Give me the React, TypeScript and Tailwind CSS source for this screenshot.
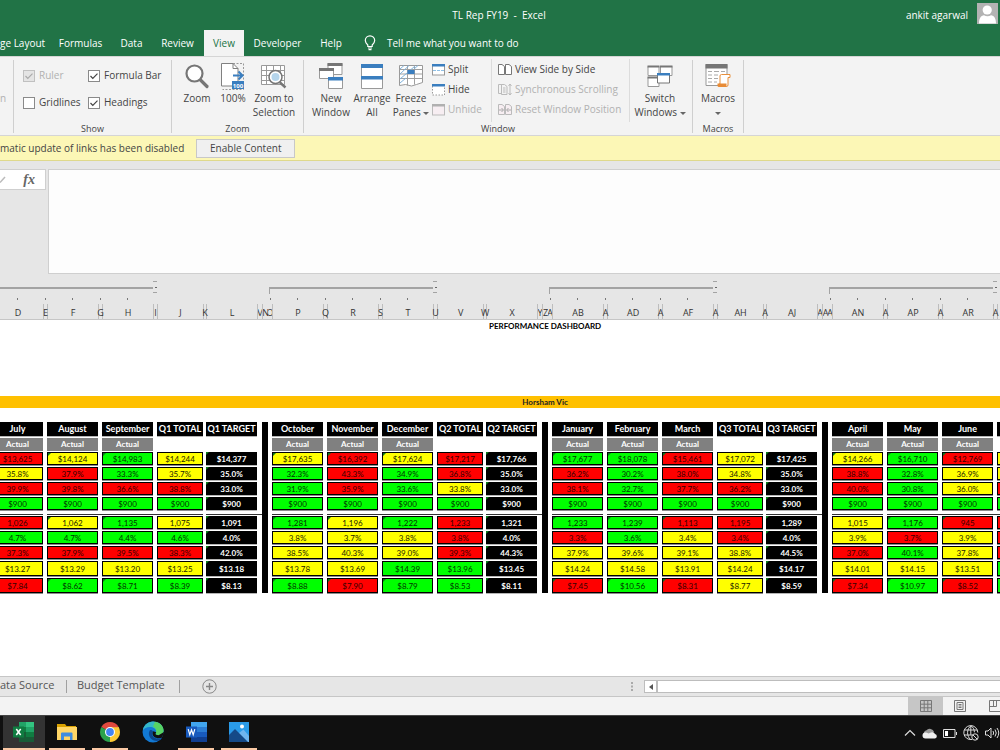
import React from 'react';
import clsx from 'clsx';

interface Month {
    name: string;
    // y / g / r prefix is the fill, a trailing * marks the green error corner
    cells: string[];
}

interface Quarter {
    id: string;
    months: Month[];
    total: string[];
    target: string[];
}

const quarters: Quarter[] = [
    {
        id: 'Q1',
        months: [
            { name: 'July', cells: ['r$13,625', 'y35.8%', 'r39.9%', 'g$900', 'r1,026', 'g4.7%', 'r37.3%', 'y$13.27', 'r$7.84'] },
            { name: 'August', cells: ['y$14,124*', 'r37.9%', 'r39.8%', 'g$900', 'y1,062*', 'g4.7%', 'r37.9%', 'y$13.29', 'g$8.62*'] },
            { name: 'September', cells: ['g$14,983*', 'g33.3%', 'r36.6%', 'g$900', 'g1,135*', 'g4.4%', 'r39.5%', 'y$13.20', 'g$8.71*'] },
        ],
        total: ['y$14,244', 'y35.7%', 'r38.8%', 'g$900', 'y1,075', 'g4.6%', 'r38.3%', 'y$13.25', 'g$8.39'],
        target: ['$14,377', '35.0%', '33.0%', '$900', '1,091', '4.0%', '42.0%', '$13.18', '$8.13'],
    },
    {
        id: 'Q2',
        months: [
            { name: 'October', cells: ['y$17,635*', 'g32.3%', 'g31.9%', 'g$900', 'g1,281*', 'y3.8%', 'y38.5%', 'y$13.78', 'g$8.88*'] },
            { name: 'November', cells: ['r$16,392*', 'r43.3%', 'r35.9%', 'g$900', 'y1,196*', 'y3.7%', 'y40.3%', 'y$13.69', 'r$7.90*'] },
            { name: 'December', cells: ['y$17,624*', 'g34.9%', 'g33.6%', 'g$900', 'g1,222*', 'y3.8%', 'y39.0%', 'g$14.39', 'g$8.79*'] },
        ],
        total: ['r$17,217', 'r36.8%', 'y33.8%', 'g$900', 'r1,233', 'r3.8%', 'r39.3%', 'g$13.96', 'g$8.53'],
        target: ['$17,766', '35.0%', '33.0%', '$900', '1,321', '4.0%', '44.3%', '$13.45', '$8.11'],
    },
    {
        id: 'Q3',
        months: [
            { name: 'January', cells: ['g$17,677*', 'r36.2%', 'r38.1%', 'g$900', 'g1,233*', 'r3.3%', 'y37.9%', 'y$14.24', 'r$7.45*'] },
            { name: 'February', cells: ['g$18,078*', 'g30.2%', 'g32.7%', 'g$900', 'g1,239*', 'g3.6%', 'y39.6%', 'y$14.58', 'g$10.56*'] },
            { name: 'March', cells: ['r$15,461*', 'r38.0%', 'r37.7%', 'g$900', 'r1,113*', 'y3.4%', 'y39.1%', 'y$13.91', 'r$8.31*'] },
        ],
        total: ['y$17,072', 'y34.8%', 'r36.2%', 'g$900', 'r1,195', 'r3.4%', 'y38.8%', 'y$14.24', 'y$8.77'],
        target: ['$17,425', '35.0%', '33.0%', '$900', '1,289', '4.0%', '44.5%', '$14.17', '$8.59'],
    },
    {
        id: '',
        months: [
            { name: 'April', cells: ['y$14,266*', 'r38.8%', 'r40.0%', 'g$900', 'y1,015', 'y3.9%', 'r37.0%', 'y$14.01', 'r$7.34*'] },
            { name: 'May', cells: ['g$16,710*', 'g32.8%', 'g30.8%', 'g$900', 'g1,176*', 'r3.7%', 'g40.1%', 'y$14.15', 'g$10.97*'] },
            { name: 'June', cells: ['r$12,769*', 'y36.9%', 'y36.0%', 'g$900', 'r945*', 'y3.9%', 'y37.8%', 'y$13.51', 'r$8.52*'] },
        ],
        total: ['y', 'y', 'r', 'g', 'r', 'r', 'r', 'g', 'g'],
        target: ['', '', '', '', '', '', '', '', ''],
    },
];

const colWidths = [
    'w-[4px]', 'w-[51px]', 'w-[4px]', 'w-[51px]', 'w-[4px]', 'w-[51px]',
    'w-[4px]', 'w-[46px]', 'w-[3px]', 'w-[51px]', 'w-[5px]', 'w-[6px]',
];

const fills: Record<string, string> = {
    y: 'bg-[#ffff00] text-[#222200]',
    g: 'bg-[#00ff00] text-[#003300]',
    r: 'bg-[#ff0000] text-[#330000]',
};

// the sheet is scrolled so that column C is the first one
const columnName = (index: number) => {
    const n = index + 2;
    const last = String.fromCharCode(65 + (n % 26));
    return n < 26 ? last : String.fromCharCode(64 + Math.floor(n / 26)) + last;
};

const isNarrow = (i: number) => i % 2 === 0 || i === 11;

const Corner = () => (
    <span className="absolute left-0 top-0 border-t-[3px] border-r-[3px] border-t-[#087a1a] border-r-transparent" />
);

const ValueCell = ({ value, tall }: { value: string; tall: boolean }) => (
    <td className="p-0 align-top">
        <div
            className={clsx(
                'relative border border-black text-center shadow-[0_1px_0_#8c8c8c]',
                tall ? 'h-[15px] leading-[14px]' : 'h-[13px] leading-[12px]',
                fills[value[0]],
            )}
        >
            {value.endsWith('*') && <Corner />}
            {value.slice(1).replace('*', '')}
        </div>
    </td>
);

const TargetCell = ({ value, tall }: { value: string; tall: boolean }) => (
    <td className="p-0 align-top">
        <div
            className={clsx(
                'relative bg-black text-center font-bold text-white shadow-[0_1px_0_#b5b5b5]',
                tall ? 'h-[15px] leading-[16px]' : 'h-[13px] leading-[14px]',
            )}
        >
            <Corner />
            {value}
        </div>
    </td>
);

const HeadCell = ({ children }: { children?: React.ReactNode }) => (
    <th className="p-0 align-top">
        <div className="h-[14px] overflow-hidden whitespace-nowrap bg-black text-center text-[9px] leading-[13px] text-white shadow-[0_1px_0_#b5b5b5]">{children}</div>
    </th>
);

const DataRow = ({ row }: { row: number }) => {
    const tall = row > 6;
    return (
        <tr className={clsx(row === 8 ? 'h-[15px]' : tall ? 'h-[17px]' : row === 3 ? 'h-[16px]' : 'h-[15px]')}>
            {quarters.map((q, i) => (
                <React.Fragment key={i}>
                    {q.months.map((m) => (
                        <React.Fragment key={m.name}>
                            <td className="p-0" />
                            <ValueCell value={m.cells[row]} tall={tall} />
                        </React.Fragment>
                    ))}
                    <td className="p-0" />
                    <ValueCell value={q.total[row]} tall={tall} />
                    <td className="p-0" />
                    <TargetCell value={q.target[row]} tall={tall} />
                    <td className="p-0" />
                </React.Fragment>
            ))}
        </tr>
    );
};

const Sheet = () => (
    <main className="flex-1 overflow-hidden bg-white font-[Lato,sans-serif] text-[8px]">
        <table className="-ml-3 w-full table-fixed border-separate border-spacing-0">
            <colgroup>
                {quarters.map((_, q) => colWidths.map((w, i) => <col key={`${q}-${i}`} className={w} />))}
                <col />
            </colgroup>
            <thead className="bg-[#e6e6e6]">
                <tr className="h-[20px]">
                    {quarters.map((_, i) => (
                        <React.Fragment key={i}>
                            <td colSpan={6} className="p-0 align-bottom">
                                <div className="ml-px h-[7px] border-l border-t-2 border-[#a3a3a3]"><div className="h-1" /></div>
                            </td>
                            <td className="p-0 align-bottom">
                                <div className="mb-px flex h-[12px] items-center justify-end border-y border-[#a3a3a3]">
                                    <span className="h-px w-[2px] bg-[#666]" />
                                </div>
                            </td>
                            <td colSpan={5} className="p-0" />
                        </React.Fragment>
                    ))}
                    <td className="p-0" />
                </tr>
                <tr className="h-[10px]">
                    {quarters.map((_, q) =>
                        colWidths.map((_w, i) => (
                            <td key={`${q}-${i}`} className="p-0">
                                {i < 6 && <div className="mx-auto h-[2px] w-px bg-[#777]" />}
                            </td>
                        )),
                    )}
                    <td className="p-0" />
                </tr>
                <tr className="h-[16px] font-['Open_Sans',sans-serif] text-[9px] leading-[17px] text-[#333]">
                    {quarters.map((_, q) =>
                        colWidths.map((_w, i) => (
                            <th key={`${q}-${i}`} className="border-b border-[#c6c6c6] p-0 font-normal">
                                <div
                                    className={clsx(
                                        'flex h-[15px] justify-center whitespace-nowrap',
                                        i > 0 && 'border-l border-[#bdbdbd]',
                                        (i === 0 || i > 9) && 'overflow-hidden',
                                    )}
                                >
                                    {isNarrow(i) ? columnName(q * 12 + i)[0] : columnName(q * 12 + i)}
                                </div>
                            </th>
                        )),
                    )}
                    <th className="border-b border-[#c6c6c6] p-0" />
                </tr>
            </thead>
            <tbody>
                <tr className="h-[12px]">
                    <td colSpan={47} className="p-0 text-center font-bold leading-[12px] text-black">PERFORMANCE DASHBOARD</td>
                    <td colSpan={2} className="p-0" />
                </tr>
                <tr className="h-[64px]"><td colSpan={49} className="p-0" /></tr>
                <tr className="h-[12px] bg-[#ffc000]">
                    <td colSpan={47} className="p-0 text-center font-bold leading-[12px] text-[#222]">Horsham Vic</td>
                    <td colSpan={2} className="p-0" />
                </tr>
                <tr className="h-[14px]"><td colSpan={49} className="p-0" /></tr>
                <tr className="h-[16px]">
                    {quarters.map((q, i) => (
                        <React.Fragment key={i}>
                            {q.months.map((m) => (
                                <React.Fragment key={m.name}>
                                    <td className="p-0" />
                                    <HeadCell>{m.name}</HeadCell>
                                </React.Fragment>
                            ))}
                            <td className="p-0" />
                            <HeadCell>{q.id && `${q.id} TOTAL`}</HeadCell>
                            <td className="p-0" />
                            <HeadCell>{q.id && `${q.id} TARGET`}</HeadCell>
                            <td className="p-0" />
                            <td rowSpan={12} className="bg-black p-0" />
                        </React.Fragment>
                    ))}
                    <td className="p-0" />
                </tr>
                <tr className="h-[14px]">
                    {quarters.map((q, i) => (
                        <React.Fragment key={i}>
                            {q.months.map((m) => (
                                <React.Fragment key={m.name}>
                                    <td className="p-0" />
                                    <td className="p-0 align-top">
                                        <div className="h-[13px] bg-[#808080] text-center font-bold leading-[13px] text-white">Actual</div>
                                    </td>
                                </React.Fragment>
                            ))}
                            <td colSpan={5} className="p-0" />
                        </React.Fragment>
                    ))}
                </tr>
                {[0, 1, 2, 3].map((row) => <DataRow key={row} row={row} />)}
                <tr className="h-[3px]">
                    {quarters.map((_, i) => (
                        <React.Fragment key={i}>
                            <td className="p-0" />
                            <td className="p-0"><div className="h-px bg-[#333]" /></td>
                            <td className="p-0" />
                            <td colSpan={5} className="p-0"><div className="h-px bg-[#333]" /></td>
                            <td className="p-0" />
                            <td colSpan={2} className="p-0"><div className="h-px bg-[#333]" /></td>
                        </React.Fragment>
                    ))}
                </tr>
                {[4, 5, 6, 7, 8].map((row) => <DataRow key={row} row={row} />)}
            </tbody>
        </table>
    </main>
);

const tabs = [
    { label: 'Formulas', width: 'w-[61px]' },
    { label: 'Data', width: 'w-[41px]' },
    { label: 'Review', width: 'w-[51px]' },
    { label: 'View', width: 'w-[40px]' },
    { label: 'Developer', width: 'w-[67px]' },
    { label: 'Help', width: 'w-[40px]' },
];

const TitleBar = () => (
    <header className="bg-[#217346] text-white">
        <div className="flex h-[30px] items-center px-[2px]">
            <div className="w-[106px]" />
            <h1 className="flex-1 whitespace-pre text-center">TL Rep FY19  -  Excel</h1>
            <div className="flex w-[108px] items-center justify-end gap-[9px]">
                <span className="whitespace-nowrap">ankit agarwal</span>
                <svg className="mt-[-3px] h-[21px] w-[21px] shrink-0" viewBox="0 0 21 21">
                    <rect width="21" height="21" fill="#b3b3b3" />
                    <circle cx="10.200" cy="7" r="4.600" fill="#fff" />
                    <path d="M2 20.500c0-5 2-8 5-8.200 2 1.400 5 1.400 7 0 3 .2 5 3.200 5 8.200z" fill="#fff" />
                </svg>
            </div>
        </div>
        <nav className="flex h-[26px] items-stretch">
            <button className="w-[50px] whitespace-nowrap pr-[9px] text-right">ge Layout</button>
            {tabs.map((t) => (
                <button key={t.label} className={clsx(t.width, 'text-center', t.label === 'View' && 'ml-px bg-[#f3f3f3] text-[#217346]')}>
                    {t.label}
                </button>
            ))}
            <button className="ml-3 flex items-center gap-[10px] whitespace-nowrap">
                <svg className="h-4 w-[14px]" viewBox="0 0 14 16" fill="none" stroke="#fff" strokeWidth="1.200">
                    <path d="M4.800 11.500V10C3.300 8.500 2.300 7.300 2.300 5.500a4.700 4.700 0 0 1 9.400 0c0 1.800-1 3-2.500 4.500v1.500zM5 13h4M5.500 14.700h3" />
                </svg>
                Tell me what you want to do
            </button>
        </nav>
    </header>
);

const CheckOption = ({ label, checked, disabled }: { label: string; checked?: boolean; disabled?: boolean }) => (
    <label className={clsx('flex items-center gap-[4px] whitespace-nowrap', disabled && 'text-[#b1b1b1]')}>
        <span className="grid">
            <input
                type="checkbox"
                defaultChecked={checked}
                disabled={disabled}
                className="peer col-start-1 row-start-1 h-3 w-3 appearance-none border border-[#8a8a8a] bg-white disabled:border-[#c0c0c0] disabled:bg-[#e4e4e4]"
            />
            <svg
                className="pointer-events-none invisible col-start-1 row-start-1 h-3 w-3 text-[#444] peer-checked:visible peer-disabled:text-[#aaa]"
                viewBox="0 0 12 12"
                fill="none"
                stroke="currentColor"
                strokeWidth="1.200"
            >
                <path d="M2.500 6l2.300 2.400L9.500 3.600" />
            </svg>
        </span>
        {label}
    </label>
);

const Group = ({ label, width, children }: { label: string; width: string; children: React.ReactNode }) => (
    <section className={clsx('flex shrink-0 flex-col border-r border-[#cfcfcf]', width)}>
        <div className="flex h-[62px]">{children}</div>
        <h2 className="mt-auto text-center text-[9px] leading-[8px] text-[#444]">{label}</h2>
    </section>
);

const Caret = () => <span className="inline-block border-x-[3px] border-t-[3px] border-x-transparent border-t-[#666] align-middle" />;

const BigButton = ({ width, icon, children }: { width: string; icon: React.ReactNode; children: React.ReactNode }) => (
    <button className={clsx('flex shrink-0 flex-col items-center', width)}>
        <span className="flex h-[31px] items-center">{icon}</span>
        <span className="whitespace-nowrap text-center leading-[14px]">{children}</span>
    </button>
);

const SmallButton = ({ icon, label, disabled }: { icon: React.ReactNode; label: string; disabled?: boolean }) => (
    <button disabled={disabled} className="flex h-5 items-center gap-[3px] whitespace-nowrap leading-[14px] disabled:text-[#b1b1b1]">
        {icon}
        {label}
    </button>
);

const ZoomIcon = () => (
    <svg width="26" height="26" viewBox="0 0 26 26" fill="none">
        <path d="M15.500 16L23 23.500" stroke="#767676" strokeWidth="3.200" strokeLinecap="round" />
        <circle cx="10.500" cy="10.500" r="8" fill="#fff" stroke="#767676" strokeWidth="2.200" />
    </svg>
);

const HundredIcon = () => (
    <svg width="24" height="28" viewBox="0 0 24 28" fill="none">
        <path d="M12 1.500h10.500v26H1.500" stroke="#999" strokeDasharray="2 1.500" />
        <path d="M.5 1.500H12l5 5V24H.5z" fill="#fff" stroke="#808080" />
        <path d="M12 1.500v5h5" stroke="#808080" />
        <path d="M12 13.500h9M17.500 9.500l4 4-4 4" stroke="#3a7ebf" strokeWidth="2" />
        <rect x="11" y="19" width="12" height="8" fill="#3a7ebf" />
        <text x="17" y="25.500" textAnchor="middle" fontSize="6" fontWeight="bold" fill="#fff">100</text>
    </svg>
);

const ZoomSelectionIcon = () => (
    <svg width="26" height="26" viewBox="0 0 26 26" fill="none">
        <path d="M.5 2.500h23v19H.5zM.5 7.500h23M.5 12.500h23M.5 17.500h23M5.500 2.500v19M12.500 2.500v19M19.500 2.500v19" fill="#fff" stroke="#999" />
        <path d="M19 19.500l5.500 5" stroke="#767676" strokeWidth="2.400" />
        <circle cx="14.500" cy="14" r="6.500" fill="#fff" stroke="#767676" strokeWidth="1.500" />
        <circle cx="14.500" cy="14" r="4" fill="#b5d5ec" />
    </svg>
);

const NewWindowIcon = () => (
    <svg width="24" height="27" viewBox="0 0 24 27" fill="none">
        <path d="M9 1.500h14v11H9z" fill="#fff" stroke="#999" />
        <path d="M8.500 1h15v3h-15z" fill="#767676" />
        <path d="M.5 6.500h14v10H.5z" fill="#fff" stroke="#999" />
        <path d="M0 6h15v3H0z" fill="#767676" />
        <path d="M9.500 15.500h14v11h-14z" fill="#fff" stroke="#999" />
        <path d="M9 15h15v3.500H9z" fill="#3a7ebf" />
    </svg>
);

const ArrangeIcon = () => (
    <svg width="22" height="26" viewBox="0 0 22 26" fill="none">
        <path d="M.5 1.500h21v24H.5z" fill="#fff" stroke="#999" />
        <path d="M0 1h22v4H0zM0 13h22v3.500H0z" fill="#3a7ebf" />
    </svg>
);

const FreezeIcon = () => (
    <svg width="24" height="24" viewBox="0 0 24 24" fill="none">
        <path d="M.5 1.500h23v17l-6 2-5 1.500-6-1.500-6 1z" fill="#fff" stroke="#999" />
        <path d="M.5 5.500h23M.5 10h23M.5 14.500h23M8.500 1.500v20M15.500 1.500v19" stroke="#a0a0a0" />
        <path d="M1 5l4-3.500M1 10l9-8.500M8 9l8-7M15 5l4-3.500M1 15l7-6M1 19l6-5" stroke="#7fb2db" />
        <rect x="8.500" y="6" width="7" height="4" fill="#3a7ebf" />
    </svg>
);

const PaneIcon = ({ kind }: { kind: 'split' | 'hide' | 'unhide' }) => (
    <svg width="13" height="13" viewBox="0 0 13 13" fill="none">
        <rect x=".5" y="1.500" width="12" height="10.500" fill={kind === 'unhide' ? '#f7eef2' : '#fff'} stroke={kind === 'unhide' ? '#bbb' : '#999'} strokeDasharray={kind === 'hide' ? '1.500 1.500' : undefined} />
        <rect y="1" width="13" height="2.500" fill={kind === 'unhide' ? '#b0b0b0' : '#3a7ebf'} />
        {kind === 'split' && <path d="M1 7.500h11" stroke="#8fc0e6" strokeDasharray="3 1" />}
    </svg>
);

const SideIcon = ({ kind }: { kind: 'side' | 'sync' | 'reset' }) => (
    <svg width="14" height="13" viewBox="0 0 14 13" fill="none" stroke={kind === 'side' ? '#777' : '#bbb'}>
        {kind === 'sync' ? (
            <path d="M.5 1.500h3v9h-3zM3.500 1.500h3l2.500 2v8H3.500zM5 5h2.500M5 7h2.500M5 9h2.500M12 1v11M10.500 3L12 1l1.500 2M10.500 10l1.500 2 1.500-2" />
        ) : (
            <>
                <path d="M.5 1.500H4l2.500 2v8h-6zM7.500 1.500H11l2.500 2v8h-6z" fill={kind === 'side' ? '#fff' : '#f7eef2'} />
                {kind === 'reset' && <path d="M1 7h4M3.500 5l2 2-2 2M13 7H9M10.500 5l-2 2 2 2" stroke="#aaa" />}
            </>
        )}
    </svg>
);

const SwitchIcon = () => (
    <svg width="26" height="24" viewBox="0 0 26 24" fill="none">
        <path d="M1 2.500h11v9H1zM13.500 2.500H25v9H13.500zM1 13.500h11v9H1z" fill="#fff" stroke="#999" />
        <path d="M.5 1.500h12v2H.5zM13 1.500h12.500v2H13zM.5 12.500h12v2H.5z" fill="#767676" />
        <path d="M10.500 10h12v9h-12z" fill="#fff" stroke="#767676" />
        <path d="M10 9h13v2.500H10z" fill="#3a7ebf" />
    </svg>
);

const MacrosIcon = () => (
    <svg width="26" height="25" viewBox="0 0 26 25" fill="none">
        <path d="M1 1.500h21v21H1z" fill="#fff" stroke="#999" />
        <path d="M.5 1h22v4.500H.5z" fill="#767676" />
        <path d="M3 8.500h4M9 8.500h5M16 8.500h4M3 12h4M9 12h4M3 15.500h4M9 15.500h4M3 19h4M9 19h3" stroke="#aaa" />
        <path d="M15 13q0-1.500 1.500-1.500H25v3h-2V22q0 1.500-1.500 1.500H14V21h1z" fill="#fff" stroke="#e78f3c" />
        <path d="M12.500 20.500h9v3.500h-7.500q-1.500 0-1.500-1.500z" fill="#e88b35" />
    </svg>
);

const Ribbon = () => (
    <div className="flex h-[80px] overflow-hidden border-b border-t border-[#d5d5d5] bg-[#f3f3f3] pb-[2px] pt-[3px] text-[#444]">
        <div className="flex w-[14px] shrink-0 flex-col border-r border-[#cfcfcf] pt-[31px] text-[#b1b1b1]">
            <span className="leading-[14px]">n</span>
        </div>
        <Group label="Show" width="w-[158px]">
            <div className="grid h-[56px] grid-cols-[65px_80px] pl-[9px] pt-[2px]">
                <CheckOption label="Ruler" checked disabled />
                <CheckOption label="Formula Bar" checked />
                <CheckOption label="Gridlines" />
                <CheckOption label="Headings" checked />
            </div>
        </Group>
        <Group label="Zoom" width="w-[132px]">
            <div className="flex pl-2">
                <BigButton width="w-[34px]" icon={<ZoomIcon />}>Zoom</BigButton>
                <BigButton width="w-[38px]" icon={<HundredIcon />}>100%</BigButton>
                <BigButton width="w-[44px]" icon={<ZoomSelectionIcon />}>Zoom to<br />Selection</BigButton>
            </div>
        </Group>
        <Group label="Window" width="w-[389px]">
            <div className="flex pl-[6px]">
                <BigButton width="w-[42px]" icon={<NewWindowIcon />}>New<br />Window</BigButton>
                <BigButton width="w-[40px]" icon={<ArrangeIcon />}>Arrange<br />All</BigButton>
                <BigButton width="w-[38px]" icon={<FreezeIcon />}>Freeze<br />Panes <Caret /></BigButton>
            </div>
            <div className="-mt-px ml-[2px] w-[60px] border-r border-[#dcdcdc]">
                <SmallButton icon={<PaneIcon kind="split" />} label="Split" />
                <SmallButton icon={<PaneIcon kind="hide" />} label="Hide" />
                <SmallButton icon={<PaneIcon kind="unhide" />} label="Unhide" disabled />
            </div>
            <div className="-mt-px w-[138px] border-r border-[#dcdcdc] pl-[6px]">
                <SmallButton icon={<SideIcon kind="side" />} label="View Side by Side" />
                <SmallButton icon={<SideIcon kind="sync" />} label="Synchronous Scrolling" disabled />
                <SmallButton icon={<SideIcon kind="reset" />} label="Reset Window Position" disabled />
            </div>
            <BigButton width="w-[60px]" icon={<SwitchIcon />}>Switch<br />Windows <Caret /></BigButton>
        </Group>
        <Group label="Macros" width="w-[51px]">
            <BigButton width="w-[50px]" icon={<MacrosIcon />}>Macros<br /><Caret /></BigButton>
        </Group>
    </div>
);

const SheetTabs = () => (
    <footer className="bg-[#e6e6e6] text-[#555]">
        <div className="flex h-[21px] border-b border-t border-[#c6c6c6]">
            <button className="my-[3px] flex w-[67px] items-center whitespace-nowrap border-r border-[#a0a0a0] pb-1 text-[11px] leading-[10px]">ata Source</button>
            <button className="my-[3px] flex w-[113px] items-center whitespace-nowrap border-r border-[#a0a0a0] pb-1 pl-[10px] text-[11px] leading-[10px]">Budget Template</button>
            <button aria-label="New sheet" className="ml-[22px] flex items-center">
                <svg width="15" height="15" viewBox="0 0 15 15" fill="none" stroke="#888">
                    <circle cx="7.500" cy="7.500" r="6.700" />
                    <path d="M7.500 4v7M4 7.500h7" strokeWidth="1.400" />
                </svg>
            </button>
            <div className="ml-auto flex w-[370px] items-center">
                <svg width="4" height="11" viewBox="0 0 4 11" fill="#aaa">
                    <path d="M1 1h2v2H1zM1 4.500h2v2H1zM1 8h2v2H1z" />
                </svg>
                <div className="ml-[10px] flex h-[13px] flex-1 border-y border-l border-[#bdbdbd] bg-white">
                    <button aria-label="Scroll left" className="flex w-[13px] items-center justify-center border-r-2 border-[#bdbdbd]">
                        <span className="border-y-[3px] border-r-[4px] border-y-transparent border-r-[#555]" />
                    </button>
                </div>
            </div>
        </div>
        <div className="flex h-[18px] justify-end bg-[#f3f3f3]">
            <button aria-label="Normal view" className="flex w-[35px] items-center justify-center bg-[#c6c6c6]">
                <svg width="12" height="12" viewBox="0 0 12 12" fill="none" stroke="#777">
                    <path d="M.5.5h11v11H.5zM4.200.5v11M7.800.5v11M.5 4.200h11M.5 7.800h11" />
                </svg>
            </button>
            <button aria-label="Page layout view" className="flex w-[34px] items-center justify-center">
                <svg width="12" height="12" viewBox="0 0 12 12" fill="none" stroke="#777">
                    <path d="M.5.500h11v11H.5zM3 2.500h6v7H3zM4.500 4.500h3M4.500 6h3M4.500 7.500h3" />
                </svg>
            </button>
            <button aria-label="Page break view" className="flex w-[23px] items-center justify-end">
                <svg width="11" height="12" viewBox="0 0 11 12" fill="none" stroke="#777">
                    <path d="M11 .5H.5v11H11M.5 6.500h7v-6M4.500.500v6" />
                </svg>
            </button>
        </div>
    </footer>
);

const ExcelLogo = () => (
    <svg width="22" height="20" viewBox="0 0 22 20">
        <path d="M6 0h15v20H6z" fill="#21a366" />
        <path d="M13 0h8v5h-8z" fill="#33c481" />
        <path d="M6 5h7v5H6zM13 10h8v5h-8z" fill="#107c41" />
        <path d="M6 10h7v5H6zM6 15h15v5H6z" fill="#185c37" />
        <rect y="4.500" width="11" height="11" fill="#107c41" />
        <path d="M3.300 7l4.400 6M7.700 7l-4.400 6" stroke="#fff" strokeWidth="1.500" />
    </svg>
);

const FolderLogo = () => (
    <svg width="20" height="18" viewBox="0 0 20 18">
        <path d="M0 1h8l1.500 2H19v5H0z" fill="#d9a100" />
        <path d="M0 4h20v13H0z" fill="#ffd666" />
        <path d="M4 17v-6.500q0-1 1-1h9.500q1 0 1 1V17H13v-3.500H7V17z" fill="#3f8de0" />
    </svg>
);

const ChromeLogo = () => (
    <svg width="20" height="20" viewBox="0 0 20 20">
        <path d="M10 10L1.340 5A10 10 0 0 1 18.660 5z" fill="#e0493e" />
        <path d="M10 10l8.660-5A10 10 0 0 1 10 20z" fill="#fbc934" />
        <path d="M10 10v10A10 10 0 0 1 1.340 5z" fill="#2ba24c" />
        <path d="M10 5.200h9L14 12.500 10 20z" fill="#fbc934" />
        <circle cx="10" cy="10" r="5" fill="#fff" />
        <circle cx="10" cy="10" r="3.900" fill="#4285f4" />
    </svg>
);

const EdgeLogo = () => (
    <svg width="22" height="22" viewBox="0 0 22 22">
        <circle cx="11" cy="11" r="10.500" fill="#1279d3" />
        <path d="M.8 9.500C1.800 4 6 .5 11 .5c6 0 10.500 4 10.500 8.800 0 3.200-2.300 5-5 5-2 0-3.200-.8-3-1.500.4-.8.700-1.300.700-2.300C14.200 7.500 11 6 8 6 4.500 6 2 7.500.8 9.500z" fill="#35b8c8" />
        <path d="M13 .7c5 .8 8.500 4.500 8.500 8.600 0 3.200-2.300 5-5 5-2 0-3.200-.8-3-1.500.4-.8.700-1.300.700-2.300 0-3-1.500-4-3.200-5z" fill="#57d364" />
        <path d="M8 9c-2.500 3.500-.5 9 4 10.500 3 1 6.500 0 8.200-2.500-4 1.500-8 .5-9.500-2-1-1.700-.5-3.500.500-4.500-.5-1-2-1.800-3.200-1.500z" fill="#0c478f" />
        <path d="M11.300 10.300c-1.300 1.500-1 4 .7 5.400 2 1.600 5.500 2 8.200.8l1.800-5.500-5.500 3.300c-2 0-3.200-.8-3-1.500l.7-1.500z" fill="#101010" />
    </svg>
);

const WordLogo = () => (
    <svg width="21" height="20" viewBox="0 0 21 20">
        <path d="M5 0h16v20H5z" fill="#2b7cd3" />
        <path d="M5 0h16v5H5z" fill="#41a5ee" />
        <path d="M5 10h16v5H5z" fill="#185abd" />
        <path d="M5 15h16v5H5z" fill="#103f91" />
        <rect y="4.500" width="11" height="11" fill="#185abd" />
        <path d="M2.200 7.200l1.600 5.600 1.700-5 1.700 5 1.600-5.600" fill="none" stroke="#fff" strokeWidth="1.200" />
    </svg>
);

const PhotosLogo = () => (
    <svg width="20" height="20" viewBox="0 0 20 20">
        <path d="M0 0h20v20H0z" fill="#2a9be8" />
        <path d="M10 11l4.500-3.500L20 14v6H10z" fill="#6fb5ee" />
        <path d="M0 13l6-6 13 13H0z" fill="#154a87" />
        <circle cx="13" cy="4.500" r="2" fill="#fff" />
    </svg>
);

const apps = [
    { name: 'Excel', logo: <ExcelLogo />, style: 'w-[42px] bg-[#333] border-[#fbc9a5]' },
    { name: 'File Explorer', logo: <FolderLogo />, style: 'ml-1 w-[36px] border-[#fbc9a5]' },
    { name: 'Chrome', logo: <ChromeLogo />, style: 'ml-[7px] w-[36px] border-[#fbc9a5]' },
    { name: 'Edge', logo: <EdgeLogo />, style: 'ml-[7px] w-[36px] border-transparent' },
    { name: 'Word', logo: <WordLogo />, style: 'ml-[7px] w-[36px] border-[#fbc9a5]' },
    { name: 'Photos', logo: <PhotosLogo />, style: 'ml-[7px] w-[36px] border-[#fbc9a5]' },
];

const Taskbar = () => (
    <div className="flex h-[35px] justify-between border-t border-[#444] bg-[#101010]">
        <div className="flex pl-[3px]">
            {apps.map((app) => (
                <button key={app.name} aria-label={app.name} className={clsx('flex items-center justify-center border-b-2', app.style)}>
                    {app.logo}
                </button>
            ))}
        </div>
        <div className="flex items-center gap-[6px]">
            <svg width="12" height="8" viewBox="0 0 12 8" fill="none" stroke="#ddd" strokeWidth="1.200"><path d="M1 6.500l5-5 5 5" /></svg>
            <svg width="15" height="11" viewBox="0 0 15 11">
                <path d="M3 7.500a3 3 0 0 1 1.500-5.300A4.500 4.500 0 0 1 12 4l-4 3z" fill="#9a9a9a" />
                <path d="M3.500 10.500a3 3 0 0 1 0-6q1.500 0 3 1L9 4.500q3-1 4 1.500a2.300 2.300 0 0 1 0 4.500z" fill="#eee" />
            </svg>
            <svg width="14" height="9" viewBox="0 0 14 9" fill="none" stroke="#ddd">
                <path d="M.5.500h11.500v8H.5zM13.500 3v3" />
                <path d="M2 2h3v5H2z" fill="#fff" stroke="none" />
            </svg>
            <svg width="16" height="16" viewBox="0 0 16 16" fill="none" stroke="#ddd">
                <path d="M9 14.500a7 7 0 1 1 5.800-7M8 .8C3.500 4 3.500 11 7.500 14.500M8 .8c2.500 1.700 3.400 4 3.400 6.500M1 5h13M1 10h8M7.800.800v9" />
                <circle cx="12" cy="12" r="3.200" />
                <path d="M9.800 9.800l4.400 4.400" />
            </svg>
            <svg width="15" height="14" viewBox="0 0 15 14" fill="none" stroke="#ddd">
                <path d="M.5 5h2.500l3-3v10L3 9H.5zM8 5q1.300 2 0 4M10 3.500q2.500 3.500 0 7M12 2q3.500 5 0 10" />
            </svg>
        </div>
    </div>
);

export default function App() {
    return (
        <div className="flex h-screen min-h-[750px] flex-col overflow-hidden bg-[#e6e6e6] font-['Open_Sans',sans-serif] text-[10px]">
            <TitleBar />
            <Ribbon />
            <div className="flex h-[25px] items-center gap-[12px] whitespace-nowrap border-b border-[#dfd98c] bg-[#fcf7b6] pt-px text-[#444]">
                <span>matic update of links has been disabled</span>
                <button className="h-[19px] w-[99px] border border-[#c8c8c8] bg-[#f0f0f0]">Enable Content</button>
            </div>
            <div className="mt-[8px] flex h-[105px] gap-[2px]">
                <div className="flex h-[21px] w-[46px] shrink-0 items-center justify-between border border-l-0 border-[#cfcfcf] bg-white pr-[10px]">
                    <svg width="6" height="8" viewBox="0 0 6 8" fill="none" stroke="#bbb" strokeWidth="1.500"><path d="M0 6.500L5 1" /></svg>
                    <span className="font-['Liberation_Serif',serif] text-[14px] font-bold italic leading-[16px] text-[#666]">fx</span>
                </div>
                <textarea aria-label="Formula bar" className="flex-1 resize-none border border-r-0 border-[#cfcfcf] bg-[#fdfdfd]" />
            </div>
            <Sheet />
            <SheetTabs />
            <Taskbar />
        </div>
    );
}
